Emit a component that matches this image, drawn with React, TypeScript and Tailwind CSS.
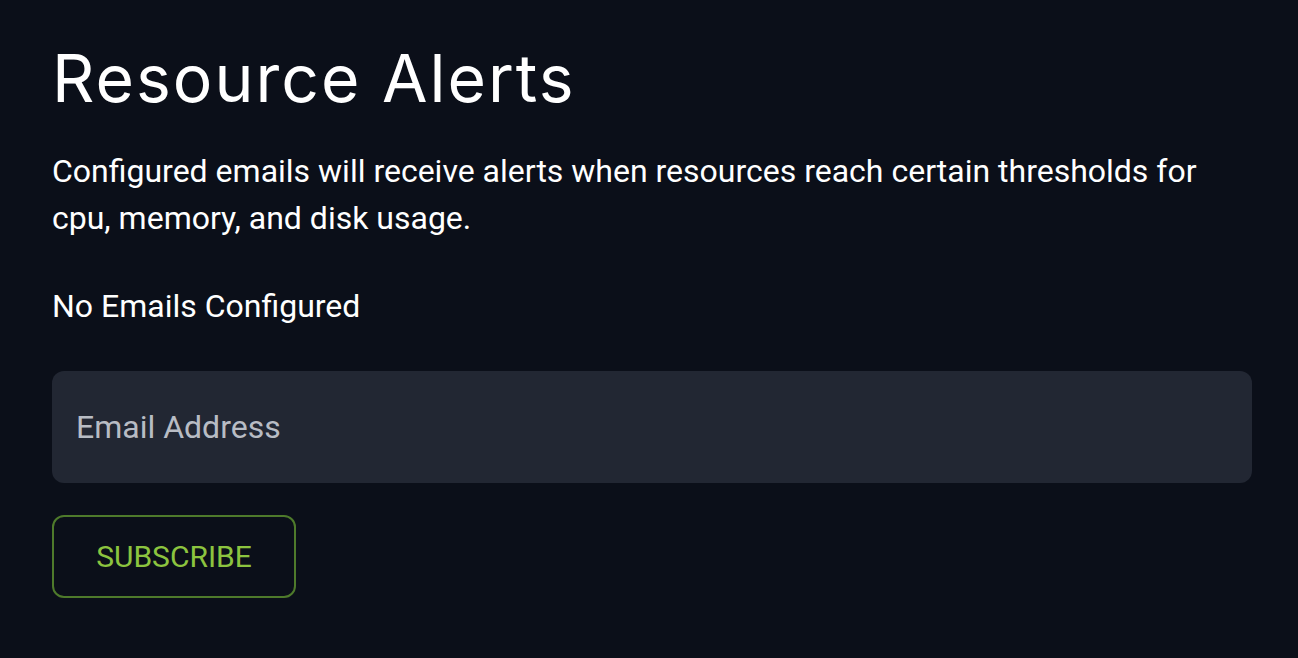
export default function App() {
  return (
    <div className="min-h-[658px] w-full bg-[#0b0f19] px-[52px] pt-[36px] text-white" style={{ fontFamily: "Roboto, 'Liberation Sans', sans-serif" }}>
      <h1 className="text-[66px] leading-[84px] font-normal tracking-[2px]" style={{ fontFamily: "Inter, 'Noto Sans', sans-serif" }}>
        Resource Alerts
      </h1>
      <p className="mt-[28px] text-[32px] leading-[47px] max-w-[1160px]">
        Configured emails will receive alerts when resources reach certain thresholds for cpu, memory, and disk usage.
      </p>
      <p className="mt-[41px] text-[32px] leading-[47px]">No Emails Configured</p>
      <div className="mt-[41px] flex h-[112px] w-[1200px] items-center rounded-[12px] bg-[#222733] px-[24px]">
        <span className="text-[32px] text-[#b8bcc4]">Email Address</span>
      </div>
      <button className="mt-[32px] flex h-[83px] w-[244px] items-center justify-center rounded-[12px] border-2 border-[#4e7a2b] text-[30px] text-[#8cc43f]">
        SUBSCRIBE
      </button>
    </div>
  );
}
